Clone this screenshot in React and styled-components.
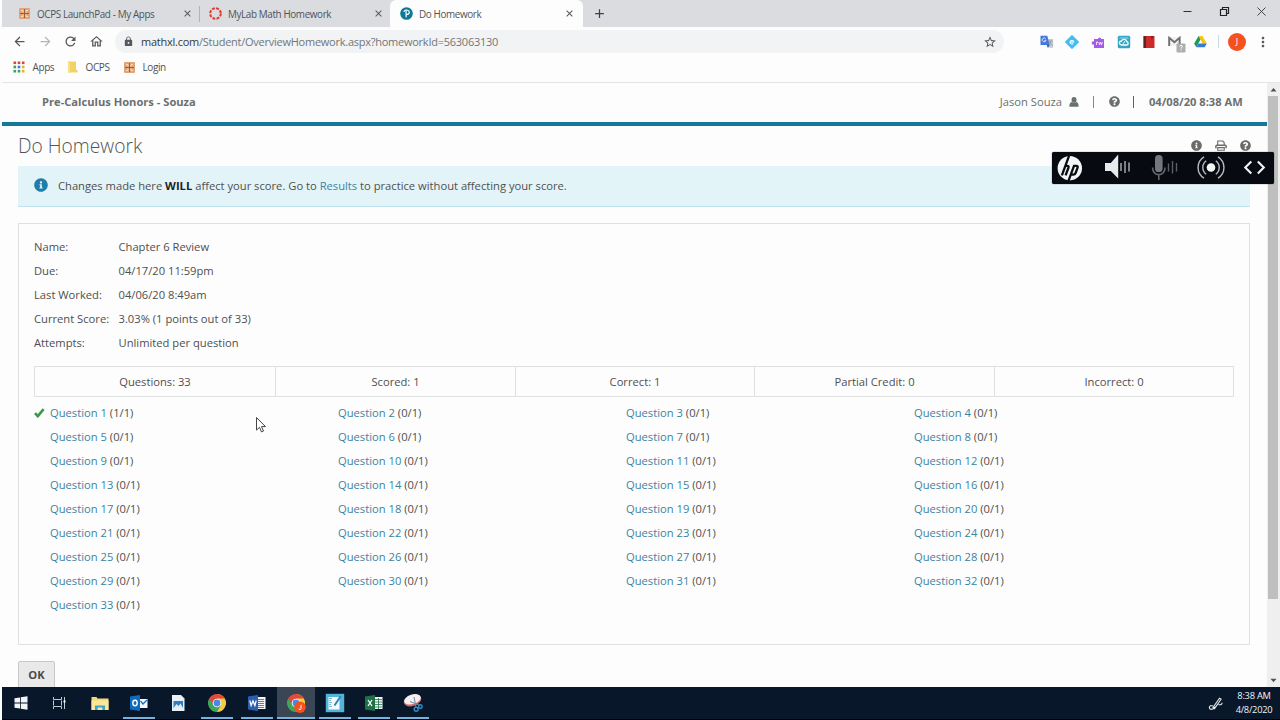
import React from 'react';
import styled, { createGlobalStyle } from 'styled-components';
import { MdArrowBack, MdArrowForward, MdRefresh, MdOutlineHome, MdLock, MdStarBorder, MdMoreVert, MdClose, MdAdd } from 'react-icons/md';
import { FaInfoCircle, FaQuestionCircle } from 'react-icons/fa';

const GlobalStyle = createGlobalStyle`
  * { box-sizing: border-box; }
  body {
    margin: 0;
    overflow: hidden;
    background: #fff;
    font-family: 'Open Sans', 'Noto Sans', sans-serif;
  }
  svg { display: block; flex: none; }
`;

const Screen = styled.div`
  width: 1280px;
  height: 720px;
  padding-left: 2px;
  display: flex;
  flex-direction: column;
  position: relative;
  overflow: hidden;
  background: #fdfdfd;
`;

/* ---------- browser chrome ---------- */

const TabStrip = styled.div`
  height: 27px;
  display: flex;
  background: #dadce0;
`;

const Tab = styled.div`
  width: ${(p) => p.$w}px;
  height: 27px;
  padding: 0 ${(p) => p.$r || 8}px 0 ${(p) => p.$pad}px;
  display: flex;
  align-items: center;
  gap: ${(p) => p.$gap || 6}px;
  color: #505357;
  border-radius: 6px 6px 0 0;
  background: ${(p) => (p.$active ? '#fdfdfd' : 'transparent')};
`;

const TabTitle = styled.span`
  flex: 1;
  font-size: 9.9px;
  line-height: 14px;
  letter-spacing: -0.38px;
  white-space: nowrap;
`;

const TabDivider = styled.div`
  width: 1px;
  height: 16px;
  margin-top: 6px;
  background: #b0b3b8;
`;

const NewTab = styled.div`
  flex: 1;
  padding-left: 9px;
  display: flex;
  align-items: center;
  color: #3c4043;
`;

const WindowButtons = styled.div`
  display: flex;
  gap: 26px;
  padding: 6px 13px 0 0;
`;

const Toolbar = styled.div`
  height: 30px;
  padding: 0 9px 1px 10px;
  display: flex;
  align-items: center;
  color: #55585c;
`;

const NavButtons = styled.div`
  width: 103px;
  display: flex;
  gap: 10.6px;
`;

const AddressBar = styled.div`
  width: 889px;
  height: 23px;
  padding: 0 7px 0 8px;
  display: flex;
  align-items: center;
  border-radius: 12px;
  background: #f1f3f4;
`;

const Url = styled.span`
  flex: 1;
  padding-left: 7px;
  font-size: 11px;
  line-height: 16px;
  letter-spacing: -0.25px;
  color: #72767a;
  b { font-weight: 400; color: #36393d; }
`;

const Extensions = styled.div`
  flex: 1;
  padding-left: 36px;
  display: flex;
  align-items: center;
  gap: 11.7px;
`;

const Profile = styled.div`
  width: 18px;
  height: 18px;
  margin-right: 9px;
  border-radius: 50%;
  background: #f4511e;
  color: #fff;
  font-size: 9px;
  line-height: 18px;
  text-align: center;
`;

const ToolbarRule = styled.div`
  width: 1px;
  height: 13px;
  margin-right: 9px;
  background: #c9dce0;
`;

const Bookmarks = styled.div`
  height: 26px;
  padding: 0 0 5px 11px;
  display: flex;
  align-items: center;
  border-bottom: 1px solid #e3e5e7;
  color: #505357;
  font-size: 10px;
  letter-spacing: -0.4px;
`;

const Bookmark = styled.div`
  width: ${(p) => p.$w}px;
  display: flex;
  align-items: center;
  gap: 7.5px;
`;

/* ---------- page ---------- */

const Viewport = styled.div`
  height: 604px;
  display: flex;
  overflow: hidden;
`;

const Page = styled.main`
  width: 1265px;
  font-size: 11.2px;
  color: #4f4f4f;
`;

const CourseBar = styled.header`
  height: 43px;
  padding: 0 24px 2px 40px;
  display: flex;
  align-items: center;
  border-bottom: 4px solid #12799a;
  color: #6a7070;
`;

const Course = styled.strong`
  flex: 1;
  font-size: 11.15px;
`;

const Student = styled.div`
  display: flex;
  align-items: center;
`;

const StudentName = styled.span`
  margin-right: 7px;
`;

const Bar = styled.span`
  width: 1px;
  height: 12px;
  margin: 0 ${(p) => p.$r}px 0 ${(p) => p.$l}px;
  background: ${(p) => p.$c || '#8a8a6f'};
`;

const Stamp = styled.strong`
  width: 94px;
  font-size: 11.15px;
  white-space: nowrap;
`;

const Content = styled.div`
  padding: 0 17px 0 16px;
`;

const TitleRow = styled.div`
  height: 40px;
  display: flex;
  align-items: center;
`;

const Title = styled.h1`
  flex: 1;
  margin: 0;
  font-size: 19.2px;
  font-weight: 300;
  line-height: 28px;
  color: #555;
`;

const PageTools = styled.div`
  display: flex;
  gap: 13px;
  padding-bottom: 1px;
  margin-right: -1px;
  color: #6a6a6a;
`;

const Notice = styled.div`
  height: 41px;
  padding: 0 16px 2px;
  display: flex;
  align-items: center;
  gap: 10px;
  background: #e3f4f9;
  border-bottom: 1px solid #bfe0ee;
  svg { color: #1f7cab; }
  b { color: #222; }
`;

const Link = styled.a`
  color: #3b84a1;
`;

const Panel = styled.section`
  height: 422px;
  margin-top: 16px;
  padding: 11px 15px;
  border: 1px solid #dfe1e1;
`;

const Facts = styled.dl`
  margin: 0;
  display: grid;
  grid-template-columns: 84.5px 1fr;
  grid-auto-rows: 24px;
  line-height: 24px;
  dt, dd { margin: 0; white-space: nowrap; }
`;

const Totals = styled.div`
  height: 31px;
  margin-top: 11px;
  display: grid;
  grid-template-columns: 240px 240px 239px 240px 1fr;
  border: 1px solid #dfe1e1;
`;

const Total = styled.div`
  line-height: 29px;
  text-align: center;
  & + & { border-left: 1px solid #dfe1e1; }
`;

const Questions = styled.div`
  margin-top: 4px;
  display: grid;
  grid-template-columns: repeat(4, 288px);
  grid-auto-rows: 24px;
`;

const Question = styled.div`
  display: flex;
  align-items: center;
  line-height: 24px;
  white-space: pre;
`;

const Mark = styled.span`
  width: 16px;
`;

const OkButton = styled.button`
  width: 37px;
  height: 30px;
  margin-top: 16px;
  padding: 0 0 4px;
  border: 1px solid #c8c8c8;
  border-radius: 2px;
  background: #e9e9e9;
  color: #4a4a4a;
  font: 700 11.2px 'Open Sans', sans-serif;
`;

const Scrollbar = styled.div`
  width: 13px;
  padding: 4px 2px 4px 1px;
  display: flex;
  flex-direction: column;
  align-items: center;
  background: #efefef;
`;

const Thumb = styled.div`
  width: 10px;
  height: 503px;
  margin: 4px 0 auto;
  background: #bfbfbf;
`;

/* floating audio widget, sits above the page */
const HpBar = styled.div`
  position: absolute;
  left: 1052px;
  top: 152px;
  width: 222px;
  height: 32px;
  overflow: hidden;
  border-radius: 2px;
  background: #070a10;
  box-shadow: 0 0 1px #000;
`;

const Pointer = styled.svg`
  position: absolute;
  left: 255px;
  top: 416px;
`;

/* ---------- taskbar ---------- */

const Taskbar = styled.footer`
  height: 33px;
  display: flex;
  background: #09172a;
  border-bottom: 1px solid #000;
`;

const Task = styled.div`
  width: ${(p) => p.$w || 39}px;
  height: 32px;
  display: flex;
  flex-direction: column;
  align-items: center;
  justify-content: space-between;
  padding-top: 6px;
  background: ${(p) => (p.$active ? '#3a4654' : 'transparent')};
  &::after {
    content: '';
    width: ${(p) => (p.$active ? '100%' : '32px')};
    height: 2px;
    background: ${(p) => (p.$open ? '#76b4de' : 'transparent')};
  }
`;

const Tray = styled.div`
  margin-left: auto;
  padding-right: 7px;
  display: flex;
  align-items: center;
  gap: 12px;
`;

const Clock = styled.div`
  width: 38px;
  color: #eef2f6;
  font-size: 9.3px;
  line-height: 14px;
  letter-spacing: -0.25px;
  text-align: center;
  white-space: nowrap;
`;

const LaunchPadIcon = () => (
  <svg width="11" height="11" viewBox="0 0 11 11">
    <rect width="11" height="11" rx="1" fill="#e3a376" />
    <path d="M5.5 1v9M1 5.5h9" stroke="#96603c" strokeWidth="1" />
    <path d="M2 2.5h2v2M9 2.5H7v2M2 8.5h2v-2M9 8.5H7v-2" stroke="#f8dcc0" fill="none" />
  </svg>
);

const CanvasIcon = () => (
  <svg width="13" height="13" viewBox="0 0 13 13">
    <circle cx="6.5" cy="6.5" r="5.3" fill="none" stroke="#db3b35" strokeWidth="2" strokeDasharray="2.9 1.26" />
  </svg>
);

const PearsonIcon = () => (
  <svg width="13" height="13" viewBox="0 0 13 13">
    <circle cx="6.5" cy="6.5" r="6.3" fill="#0b7a99" />
    <path d="M4 4.3C5.6 2.7 9.3 2.8 9.3 5.3 9.3 7.1 7.5 7.8 6 7.2M6.1 4.6v5.2" fill="none" stroke="#fff" strokeWidth="1.2" strokeLinecap="round" />
  </svg>
);

const AppsIcon = () => (
  <svg width="12" height="12" viewBox="0 0 12 12">
    {['#d8453a', '#d8453a', '#d8453a', '#39a35a', '#3f7fe0', '#e3b32c', '#39a35a', '#39a35a', '#e3b32c'].map((c, i) => (
      <rect key={i} x={0.5 + (i % 3) * 4.2} y={0.5 + Math.floor(i / 3) * 4.2} width="2.6" height="2.6" fill={c} />
    ))}
  </svg>
);

const FolderIcon = () => (
  <svg width="11" height="12" viewBox="0 0 11 12">
    <path d="M1 .5h8V9h1.5v2.5H1z" fill="#f2d264" />
    <path d="M1 .5h2v11H1z" fill="#f7e08a" />
  </svg>
);

const ExtIcons = () => (
  <>
    <svg width="13.6" height="14" viewBox="0 0 14 14">
      <path d="M6 4h7.5v9H8z" fill="#c4c9ce" />
      <path d="M.5.5h7L10 10H.5z" fill="#4479dc" />
      <path d="M8 13l2-3H7z" fill="#2c56b0" />
      <path d="M6 3.8A2 2 0 1 0 6.2 5.3H4.4" fill="none" stroke="#d5e2fa" />
      <path d="M9 6h4M11 6c0 2-1 3-2 4M10 7.5l3 3" stroke="#8b959d" strokeWidth=".8" fill="none" />
    </svg>
    <svg width="14" height="14" viewBox="0 0 14 14">
      <path d="M7 .7L13.3 7 7 13.3.7 7z" fill="#3fbdf0" stroke="#3fbdf0" strokeWidth="1.2" strokeLinejoin="round" />
      <path d="M5.2 7h3.5a1.8 1.8 0 1 0-.6 1.5" fill="none" stroke="#fff" strokeWidth="1.1" />
    </svg>
    <svg width="14" height="14" viewBox="0 0 14 14">
      <path d="M3 4h4a1.6 1.6 0 1 1 3.2 0H13v9H3V9.6A1.7 1.7 0 1 1 3 6.4z" fill="#a35be8" />
      <path d="M5.6 10V6.8M5.6 8q.4-1.1 1.4-1M7.8 6.9l.9 2.9.9-2.4.9 2.4.9-2.9" fill="none" stroke="#fff" strokeWidth=".8" />
    </svg>
    <svg width="14" height="14" viewBox="0 0 14 14">
      <rect x=".8" y=".8" width="12.4" height="12.4" rx="1.5" fill="#33a6c3" />
      <path d="M4.5 10a2 2 0 0 1 0-4 2.8 2.8 0 0 1 5.3.6A1.8 1.8 0 0 1 10 10z" fill="#33a6c3" stroke="#fff" strokeWidth="1.3" />
      <path d="M7.8 6.2L6.2 8.8" stroke="#fff" strokeWidth="1" />
      <path d="M2.5 3h9" stroke="#bce3ed" strokeWidth=".8" />
    </svg>
    <svg width="14" height="14" viewBox="0 0 14 14">
      <rect x="1.5" y="1" width="11" height="12" fill="#cf2a2a" />
      <path d="M2.8 1v12" stroke="#5b2522" strokeWidth="2.4" />
      <path d="M9 1h2v3L10 3 9 4z" fill="#7d2521" />
    </svg>
    <svg width="18" height="22" viewBox="0 0 18 22">
      <path d="M0 6h13v9H0z" fill="#f2f2f2" />
      <path d="M1.2 15V6.8l5.2 4.4 5.2-4.4V15" fill="none" stroke="#6e6e6e" strokeWidth="1.9" />
      <rect x="8.5" y="12.5" width="9" height="9" rx="1" fill="#adadad" />
      <path d="M11.6 15.6q.2-1.2 1.4-1.2 1.4 0 1.4 1.2 0 .8-1.4 1.5v.6M13 18.6v1" fill="none" stroke="#fff" />
    </svg>
    <svg width="13" height="12" viewBox="0 0 13 12" style={{ marginLeft: -4 }}>
      <path d="M4.5 0h4l4.3 7.5H8.6z" fill="#f5c518" />
      <path d="M4.5 0L.2 7.6l2 3.7 4.3-7.7z" fill="#1c9a57" />
      <path d="M4.4 7.5h8.4l-2.1 3.8H2.2z" fill="#3a78e0" />
    </svg>
  </>
);

const UserIcon = () => (
  <svg width="10" height="10" viewBox="0 0 10 10">
    <ellipse cx="5" cy="2.9" rx="2.5" ry="2.9" fill="currentColor" />
    <path d="M.4 9.8C.2 7 1.2 5.4 2.7 5q2.3 2 4.6 0c1.5.4 2.5 2 2.3 4.8z" fill="currentColor" />
  </svg>
);

const CheckIcon = () => (
  <svg width="11" height="10" viewBox="0 0 11 10">
    <path d="M1 5.2l2.8 3L9.6 1.2" fill="none" stroke="#3b9a48" strokeWidth="2.6" />
  </svg>
);

const PrintIcon = () => (
  <svg width="12" height="11" viewBox="0 0 12 11">
    <path d="M2.7 5V1h5l1.5 1.5V5M2.7 7.6h6.6v2.6H2.7z" fill="none" stroke="currentColor" strokeWidth="1.1" />
    <path d="M.9 8.3V6.2q0-1 1-1h8.2q1 0 1 1v2.1" fill="none" stroke="currentColor" strokeWidth="1.5" />
  </svg>
);

const HpWidget = () => (
  <svg width="222" height="32" viewBox="0 0 222 32">
    <circle cx="17.8" cy="16.2" r="12.2" fill="#f3f4f5" />
    <path d="M17.2 3.4L9.9 23.4M12.9 13.9h2.4q1.8 0 1.2 1.7l-2.9 7.8M16.4 29.2L22 13.9h2.4q1.8 0 1.2 1.7L23.6 21q-.6 1.7-2.4 1.7h-2.3" fill="none" stroke="#090c12" strokeWidth="2.3" />
    <path d="M53 11h5.8l7.4-8.5v24l-7.4-7.5H53z" fill="#e9eaeb" />
    <path d="M69 11v8M73 9v12M77 10.5v9" stroke="#aeb1b4" strokeWidth="1.4" />
    <rect x="103" y="3" width="7.6" height="17" rx="3.6" fill="#74777c" />
    <path d="M100.5 15.5c0 9.5 12.6 9.5 12.6 0M106.8 22.5v5.5" fill="none" stroke="#63676c" strokeWidth="1.6" />
    <path d="M116.5 11.5v8M120.5 9v12.5M124.5 11v8.5" stroke="#5c6065" strokeWidth="1.4" />
    <circle cx="159" cy="15.5" r="4.3" fill="#f6f6f6" />
    <path d="M154.2 8.8a8.3 8.3 0 0 0 0 13.4M163.8 8.8a8.3 8.3 0 0 1 0 13.4M152 4.8a12.6 12.6 0 0 0 0 21.4M166 4.8a12.6 12.6 0 0 1 0 21.4" fill="none" stroke="#b9bcc0" strokeWidth="1.4" />
    <path d="M199.3 9.5l-6 6 6 6M205.8 9.5l6 6-6 6" fill="none" stroke="#f3f3f3" strokeWidth="2.1" />
  </svg>
);

const ChromeIcon = ({ badge }) => (
  <svg width="20" height="20" viewBox="0 0 20 20">
    <path d="M10 10V1a9 9 0 0 1 7.8 4.5A9 9 0 0 1 10 19z" fill="#f8cb3c" />
    <path d="M10 10L2.2 5.5A9 9 0 0 0 10 19l3.5-6z" fill="#3ea65a" />
    <path d="M2.2 5.5A9 9 0 0 1 17.8 5.5H10L6.2 12z" fill="#e2483b" />
    <circle cx="10" cy="10" r="4.3" fill="#fff" />
    <circle cx="10" cy="10" r="3.4" fill="#4b87e8" />
    {badge && (
      <>
        <circle cx="14" cy="14.2" r="5.8" fill="#f4511e" />
        <path d="M15 11.8v3.6q0 1.2-1.1 1.2-1 0-1.1-1" fill="none" stroke="#fff" strokeWidth=".9" />
      </>
    )}
  </svg>
);

const OfficeIcon = ({ color, kind }) => (
  <svg width="20" height="20" viewBox="0 0 20 20">
    <rect x="9" y={kind === 'outlook' ? 6 : 4} width="9.5" height={kind === 'outlook' ? 9 : 12} fill="#f5f8fb" />
    {kind === 'outlook' ? (
      <path d="M11.5 8l2.5 3 4-4" fill="none" stroke={color} strokeWidth="1.2" />
    ) : (
      <path d={kind === 'excel' ? 'M11 6.5h7M11 9h7M11 11.5h7M11 14h7M14.5 5v11' : 'M11 6.5h6M11 8.5h6M11 10.5h6M11 12.5h6M11 14.5h6'} stroke={color} strokeWidth=".8" />
    )}
    <path d="M1 3.5L11 2v16L1 16.5z" fill={color} />
    {kind === 'outlook' && <ellipse cx="6" cy="10" rx="2.2" ry="2.7" fill="none" stroke="#fff" strokeWidth="1.4" />}
    {kind === 'word' && <path d="M2.8 7.5l1.3 5 1.9-4.6 1.9 4.6 1.3-5" fill="none" stroke="#fff" strokeWidth="1.2" />}
    {kind === 'excel' && <path d="M4 7l4 6M8 7l-4 6" fill="none" stroke="#fff" strokeWidth="1.3" />}
  </svg>
);

const totals = ['Questions: 33', 'Scored: 1', 'Correct: 1', 'Partial Credit: 0', 'Incorrect: 0'];

const facts = [
  ['Name:', 'Chapter 6 Review'],
  ['Due:', '04/17/20 11:59pm'],
  ['Last Worked:', '04/06/20 8:49am'],
  ['Current Score:', '3.03% (1 points out of 33)'],
  ['Attempts:', 'Unlimited per question'],
];

const questions = Array.from({ length: 33 }, (_, i) => ({ n: i + 1, score: i === 0 ? 1 : 0 }));

const Browser = () => (
  <>
    <TabStrip>
      <Tab $w={197} $pad={17} $gap={7} $r={6}>
        <LaunchPadIcon />
        <TabTitle>OCPS LaunchPad - My Apps</TabTitle>
        <MdClose size={11} />
      </Tab>
      <TabDivider />
      <Tab $w={190} $pad={9} $r={6}>
        <CanvasIcon />
        <TabTitle>MyLab Math Homework</TabTitle>
        <MdClose size={11} />
      </Tab>
      <Tab $w={193} $pad={10} $active>
        <PearsonIcon />
        <TabTitle>Do Homework</TabTitle>
        <MdClose size={11} />
      </Tab>
      <NewTab><MdAdd size={15} /></NewTab>
      <WindowButtons>
        <svg width="11" height="11" viewBox="0 0 11 11"><path d="M1.5 5.5h8" stroke="#333" /></svg>
        <svg width="11" height="11" viewBox="0 0 11 11"><path d="M1.5 3.5h6v6h-6zM3.5 3V1.5h6v6H8" fill="none" stroke="#222" strokeWidth="1.2" /></svg>
        <svg width="11" height="11" viewBox="0 0 11 11"><path d="M1.5 1.5l8 8M9.5 1.5l-8 8" stroke="#444" /></svg>
      </WindowButtons>
    </TabStrip>
    <Toolbar>
      <NavButtons>
        <MdArrowBack size={15} />
        <MdArrowForward size={15} color="#b3b6b9" />
        <MdRefresh size={15} />
        <MdOutlineHome size={15} />
      </NavButtons>
      <AddressBar>
        <MdLock size={11} />
        <Url><b>mathxl.com</b>/Student/OverviewHomework.aspx?homeworkId=563063130</Url>
        <MdStarBorder size={14} />
      </AddressBar>
      <Extensions><ExtIcons /></Extensions>
      <ToolbarRule />
      <Profile>J</Profile>
      <MdMoreVert size={16} />
    </Toolbar>
    <Bookmarks>
      <Bookmark $w={54}><AppsIcon />Apps</Bookmark>
      <Bookmark $w={57}><FolderIcon />OCPS</Bookmark>
      <Bookmark $w={60}><LaunchPadIcon />Login</Bookmark>
    </Bookmarks>
  </>
);

const Homework = () => (
  <Page>
    <CourseBar>
      <Course>Pre-Calculus Honors - Souza</Course>
      <Student>
        <StudentName>Jason Souza</StudentName>
        <UserIcon />
        <Bar $l={14} $r={15} />
        <FaQuestionCircle size={11} />
        <Bar $l={13} $r={15} $c="#6a5a6a" />
        <Stamp>04/08/20 8:38 AM</Stamp>
      </Student>
    </CourseBar>
    <Content>
      <TitleRow>
        <Title>Do Homework</Title>
        <PageTools>
          <FaInfoCircle size={11} />
          <PrintIcon />
          <FaQuestionCircle size={11} />
        </PageTools>
      </TitleRow>
      <Notice>
        <FaInfoCircle size={14} />
        <span>
          Changes made here <b>WILL</b> affect your score. Go to <Link>Results</Link> to practice without affecting your score.
        </span>
      </Notice>
      <Panel>
        <Facts>
          {facts.map(([label, value]) => (
            <React.Fragment key={label}>
              <dt>{label}</dt>
              <dd>{value}</dd>
            </React.Fragment>
          ))}
        </Facts>
        <Totals>
          {totals.map((t) => <Total key={t}>{t}</Total>)}
        </Totals>
        <Questions>
          {questions.map((q) => (
            <Question key={q.n}>
              <Mark>{q.score > 0 && <CheckIcon />}</Mark>
              <Link>Question {q.n}</Link> ({q.score}/1)
            </Question>
          ))}
        </Questions>
      </Panel>
      <OkButton>OK</OkButton>
    </Content>
  </Page>
);

const App = () => (
  <Screen>
    <GlobalStyle />
    <Browser />
    <Viewport>
      <Homework />
      <Scrollbar>
        <svg width="7" height="5" viewBox="0 0 7 5"><path d="M.5 4.5L3.5 1l3 3.5z" fill="#505050" /></svg>
        <Thumb />
        <svg width="7" height="5" viewBox="0 0 7 5"><path d="M.5.8h6l-3 3.4z" fill="#505050" /></svg>
      </Scrollbar>
    </Viewport>
    <Taskbar>
      <Task $w={38}>
        <svg width="20" height="20" viewBox="0 0 20 20"><path d="M3.5 5.2L9 4.4v5.2H3.5zM9.8 4.3l6.7-1v6.3H9.8zM3.5 10.4H9v5.2l-5.5-.8zM9.8 10.4h6.7v6.3l-6.7-1z" fill="#f2f5f8" /></svg>
      </Task>
      <Task>
        <svg width="20" height="20" viewBox="0 0 20 20"><path d="M3.5 4v2.5h8V4M3.5 16v-2.5h8V16M3.5 7.5v5M11.5 7.5v5M14.5 4v12" fill="none" stroke="#c3cad2" /><path d="M13.5 7.5h2v2h-2z" fill="#fff" /></svg>
      </Task>
      <Task $w={41}>
        <svg width="20" height="20" viewBox="0 0 20 20"><path d="M1.5 4h5l1 1.5h11V17h-17z" fill="#f7d774" /><path d="M1.5 7.5h17V17h-17z" fill="#fbe6a0" /><path d="M5 17v-4.5h10V17h-2.7v-2.4H7.7V17z" fill="#3fa5c8" /></svg>
      </Task>
      <Task $w={38} $open><OfficeIcon color="#0f6cbd" kind="outlook" /></Task>
      <Task>
        <svg width="20" height="20" viewBox="0 0 20 20"><path d="M4 2h9l3.5 3.5V18H4z" fill="#e9f0f5" /><path d="M5.5 8h9.5v7H5.5z" fill="#2d7fc1" /><path d="M5.5 15l3-4 2 2 2-2.5 2.5 4.5z" fill="#fff" opacity=".85" /></svg>
      </Task>
      <Task $w={40} $open><ChromeIcon /></Task>
      <Task $w={40} $open><OfficeIcon color="#2b5fad" kind="word" /></Task>
      <Task $w={38} $open $active><ChromeIcon badge /></Task>
      <Task $w={40} $open>
        <svg width="20" height="20" viewBox="0 0 20 20"><rect x=".8" y=".8" width="18.4" height="18.4" fill="#54b4d8" /><path d="M3.5 4h11v12.5h-11z" fill="#f3fbff" /><path d="M4 5.5h3M4 7.5h2M4 9.5h3M4 11.5h2M4 13.5h3" stroke="#54b4d8" strokeWidth=".8" /><path d="M15.8 3L9.5 12.5" stroke="#2e88b4" strokeWidth="2" /></svg>
      </Task>
      <Task $w={38} $open><OfficeIcon color="#1e7145" kind="excel" /></Task>
      <Task $w={40} $open>
        <svg width="20" height="20" viewBox="0 0 20 20"><ellipse cx="9.5" cy="7.5" rx="9" ry="5.6" fill="#c76a72" transform="rotate(-18 9.5 7.5)" /><ellipse cx="9.5" cy="6.3" rx="8.6" ry="4.8" fill="#f7eeee" transform="rotate(-18 9.5 6.3)" /><path d="M11 4l2 10M7 8.5l10 4" stroke="#6b8ca5" /><circle cx="13.2" cy="16.2" r="2" fill="none" stroke="#2c8ccc" strokeWidth="1.4" /><circle cx="17.3" cy="13.5" r="1.8" fill="none" stroke="#2c8ccc" strokeWidth="1.4" /></svg>
      </Task>
      <Tray>
        <svg width="15" height="15" viewBox="0 0 15 15"><path d="M5 11.5L11.5 2.2l1.6 1-6.6 9.4zM5 10C1 8.5.3 12.8 3 13.3c2.2.3 3-1 4-2.4M10.5 8.5c2 .8 4-.2 3.3-1.8" fill="none" stroke="#e6ebf0" strokeWidth="1.1" /></svg>
        <Clock>8:38 AM<br />4/8/2020</Clock>
      </Tray>
    </Taskbar>
    <HpBar><HpWidget /></HpBar>
    <Pointer width="12" height="18" viewBox="0 0 12 18">
      <path d="M1.5 1.5v12.6l3-2.8 2 4.6 2-.9-2-4.4h4z" fill="#fff" stroke="#444" />
    </Pointer>
  </Screen>
);

export default App;
